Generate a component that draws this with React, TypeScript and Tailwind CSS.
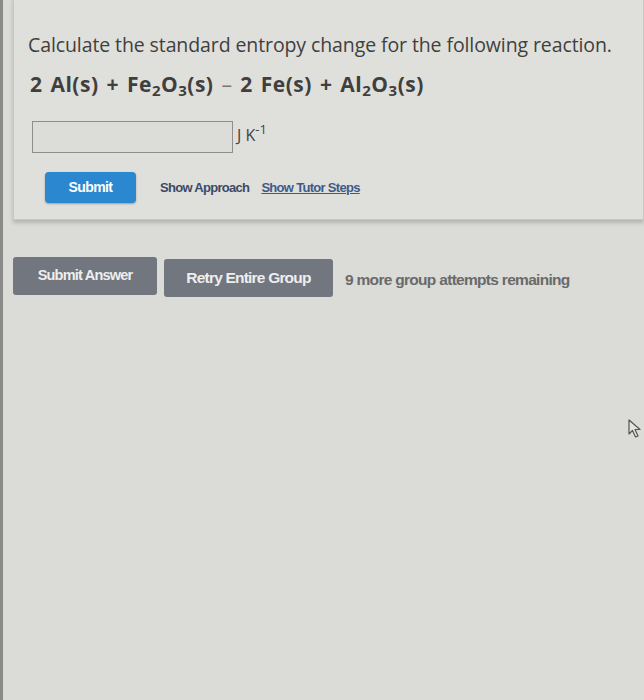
import React from "react";

function Cursor() {
  return (
    <svg width="18" height="22" viewBox="0 0 18 22" className="absolute left-[624px] top-[418px]">
      <path d="M2 2 L2 16 L5.5 12.5 L8.5 19 L11 18 L8 11.5 L13 11.5 Z" fill="#e4e4e0" stroke="#555" strokeWidth="1.2" strokeLinejoin="round" />
    </svg>
  );
}

export default function App() {
  return (
    <div className="relative w-[644px] h-[700px] overflow-hidden bg-[#dbdbd7] border-l-[3px] border-[#8a8a88] font-['Open_Sans',sans-serif]">
      <div className="ml-[10px] mt-[-4px] bg-[#dfdfdb] border border-[#c6c6c2] shadow-[0_3px_4px_rgba(0,0,0,0.18)] pl-[14px] pt-[33px] pb-[16px]">
        <p className="text-[19.5px] text-[#3f3f3f] tracking-[-0.1px]">Calculate the standard entropy change for the following reaction.</p>
        <p className="mt-[10px] ml-[2px] text-[21px] font-bold text-[#3f3f3f] tracking-[0.5px] [word-spacing:2px]">
          2 Al(s) + Fe<sub className="text-[15px]">2</sub>O<sub className="text-[15px]">3</sub>(s) <span className="text-[#777] font-normal">–</span> 2 Fe(s) + Al<sub className="text-[15px]">2</sub>O<sub className="text-[15px]">3</sub>(s)
        </p>
        <div className="mt-[20px] ml-[4px] flex items-center gap-[4px]">
          <div className="w-[201px] h-[32px] border border-[#8e8e8c] bg-[#dcdcd8]" />
          <span className="text-[16px] text-[#444] -mt-[4px]">J K<sup className="text-[13px]">-1</sup></span>
        </div>
        <div className="mt-[19px] ml-[17px] flex items-center">
          <div className="w-[91px] h-[31px] rounded-[4px] bg-[#2b87cf] shadow-[0_1px_2px_rgba(0,0,0,0.3)] flex items-center justify-center">
            <span className="text-white font-bold text-[14px] tracking-[-0.6px] font-['Liberation_Sans',sans-serif]">Submit</span>
          </div>
          <span className="ml-[24px] text-[13px] font-bold text-[#3b4a66] tracking-[-0.7px] font-['Liberation_Sans',sans-serif]">Show Approach</span>
          <span className="ml-[12px] text-[13px] font-bold text-[#3d5b8a] underline tracking-[-0.7px] font-['Liberation_Sans',sans-serif]">Show Tutor Steps</span>
        </div>
      </div>
      <div className="mt-[35px] ml-[10px] flex items-center">
        <div className="w-[144px] h-[38px] rounded-[3px] bg-[#72767e] flex items-center justify-center">
          <span className="text-[#eeeeee] font-bold text-[14.5px] tracking-[-0.8px] font-['Liberation_Sans',sans-serif]">Submit Answer</span>
        </div>
        <div className="ml-[7px] mt-[4px] w-[169px] h-[38px] rounded-[3px] bg-[#72767e] flex items-center justify-center">
          <span className="text-[#eeeeee] font-bold text-[15.5px] tracking-[-0.8px] font-['Liberation_Sans',sans-serif]">Retry Entire Group</span>
        </div>
        <span className="ml-[12px] mt-[8px] text-[15.5px] font-bold text-[#6a6a6a] tracking-[-0.7px] font-['Liberation_Sans',sans-serif]">9 more group attempts remaining</span>
      </div>
      <Cursor />
    </div>
  );
}
